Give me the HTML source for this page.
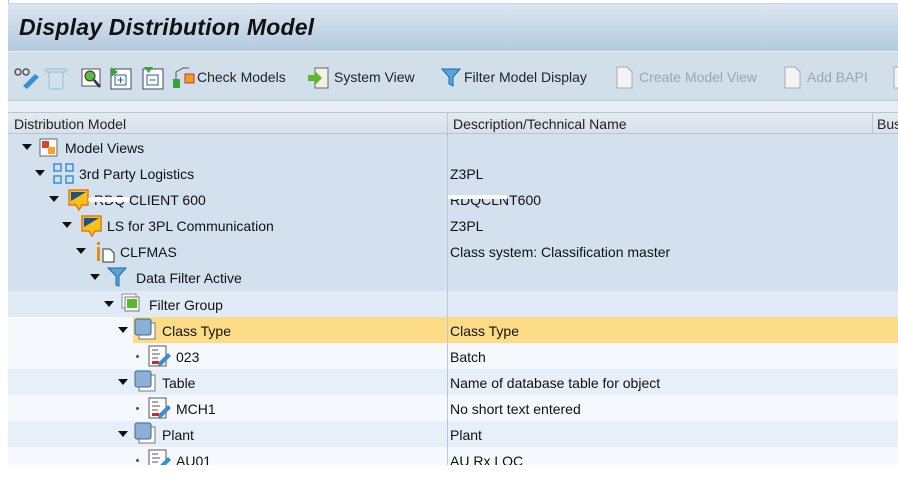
<!DOCTYPE html>
<html><head><style>
*{margin:0;padding:0;box-sizing:border-box}
body{width:898px;height:477px;background:#fff;font-family:"Liberation Sans",sans-serif;position:relative;overflow:hidden}
.abs{position:absolute}
#title{left:8px;top:3px;width:890px;height:48px;background:linear-gradient(#dbe6f1,#b4cadf);border-top:1px solid #c8d6e4}
#title span{position:absolute;left:11px;top:10px;font-size:23px;font-weight:bold;font-style:italic;color:#111;letter-spacing:0.2px}
#tb{left:8px;top:51px;width:890px;height:50px;background:#d1dfeb;border-top:1px solid #e9f0f7;border-bottom:1px solid #b9cadb}
.tbt{position:absolute;top:17px;font-size:14px;color:#222}
.dis{color:#9aa5b0}
#gap{left:8px;top:101px;width:890px;height:11px;background:#e7eef6}
#hdr{left:8px;top:112px;width:890px;height:22px;background:linear-gradient(#e4eaf0,#d8e0e9);border-top:1px solid #b8c4d0;border-bottom:1px solid #b8c4d0;font-size:14px;color:#222}
.row{position:absolute;left:8px;width:890px;height:26px;font-size:14px;color:#111}
.row .t{position:absolute;top:6px}
.row .d{position:absolute;left:442px;top:6px}
.tri{position:absolute;top:10px;width:0;height:0;border-left:5px solid transparent;border-right:5px solid transparent;border-top:6px solid #111}
.dot{position:absolute;top:12px;width:3px;height:3px;background:#555;border-radius:50%}
.vl{position:absolute;top:112px;width:1px;height:353px;background:#b8c8d8}
</style></head><body>
<div class="abs" style="left:8px;top:0;width:1px;height:465px;background:#b9c7d4"></div>
<div id="title" class="abs"><span>Display Distribution Model</span></div>
<div id="tb" class="abs">
<svg class="abs" style="left:5px;top:12px" width="190" height="28">
<g fill="none" stroke="#555" stroke-width="1.5"><circle cx="5" cy="8" r="3"/><circle cx="13" cy="8" r="3"/></g><path d="M10 22 L22 10 L26 13 L14 25Z" fill="#3b8ed0"/>
<g fill="#cfe0ee" stroke="#9cbad3"><rect x="36" y="8" width="14" height="17" rx="2"/><rect x="33" y="5" width="20" height="3"/></g>
<rect x="69" y="5" width="18" height="17" fill="#fff" stroke="#555"/><circle cx="77" cy="12" r="5" fill="#5bbb3b" stroke="#333"/><path d="M81 16 L87 23" stroke="#333" stroke-width="2.5"/>
<rect x="98" y="5" width="20" height="20" fill="#fff" stroke="#445"/><path d="M98 3 L105 8 L98 13Z" fill="#3aa33a"/><rect x="102" y="11" width="11" height="10" fill="none" stroke="#1f5fa0"/><path d="M107.5 13v6M104.5 16h6" stroke="#1f5fa0"/>
<rect x="130" y="5" width="20" height="20" fill="#fff" stroke="#445"/><path d="M131 3 L140 3 L135.5 9Z" fill="#3aa33a"/><rect x="134" y="11" width="11" height="10" fill="none" stroke="#1f5fa0"/><path d="M136.5 16h6" stroke="#1f5fa0"/>
<rect x="160" y="15" width="7" height="9" fill="#3aa33a"/><path d="M163 15 L163 8 L170 4 L176 4" stroke="#555" fill="none"/><rect x="172" y="10" width="9" height="9" fill="#f0a020" stroke="#c33"/>
</svg>
<span class="tbt" style="left:189px">Check Models</span>
<svg class="abs" style="left:298px;top:13px" width="26" height="26"><rect x="9" y="3" width="13" height="20" fill="#f3f0e4" stroke="#666"/><path d="M2 10h7v-4l7 7-7 7v-4H2z" fill="#5cb82e"/></svg>
<span class="tbt" style="left:326px">System View</span>
<svg class="abs" style="left:432px;top:15px" width="22" height="22"><path d="M2 2h18l-7 8v9l-4-2v-7z" fill="#5aa3d6" stroke="#1f6aa8"/></svg>
<span class="tbt" style="left:456px">Filter Model Display</span>
<svg class="abs" style="left:607px;top:13px" width="20" height="26"><path d="M2 2h10l5 5v16H2z" fill="#f4f4f4" stroke="#aaa"/></svg>
<span class="tbt dis" style="left:631px">Create Model View</span>
<svg class="abs" style="left:775px;top:13px" width="20" height="26"><path d="M2 2h10l5 5v16H2z" fill="#f4f4f4" stroke="#aaa"/></svg>
<span class="tbt dis" style="left:799px">Add BAPI</span>
<svg class="abs" style="left:884px;top:13px" width="10" height="26"><path d="M2 2h10v21H2z" fill="#f4f4f4" stroke="#aaa"/></svg>
</div>
<div id="gap" class="abs"></div>
<div id="hdr" class="abs"><span class="abs" style="left:6px;top:3px">Distribution Model</span><span class="abs" style="left:445px;top:3px">Description/Technical Name</span><span class="abs" style="left:869px;top:3px">Bus</span></div>

<div class="row" style="top:134px;height:157px;background:#d3e1ee"></div>
<div class="row" style="top:291px;background:#e1ebf6"></div>
<div class="row" style="top:317px;background:#f5f9fe"></div>
<div class="row" style="top:317px;left:133px;width:765px;background:#fcdc86"></div>
<div class="row" style="top:343px;background:#f5f9fe"></div>
<div class="row" style="top:369px;background:#e7eff8"></div>
<div class="row" style="top:395px;background:#f5f9fe"></div>
<div class="row" style="top:421px;background:#e7eff8"></div>
<div class="row" style="top:447px;height:18px;background:#f5f9fe"></div>

<div class="row" style="top:134px"><div class="tri" style="left:14px"></div>
<svg class="abs" style="left:31px;top:4px" width="20" height="20"><rect x="1" y="1" width="17" height="17" fill="#fff" stroke="#666"/><rect x="3" y="3" width="7" height="7" fill="#d9452a"/><rect x="9" y="9" width="7" height="7" fill="#f6a623"/></svg>
<span class="t" style="left:57px">Model Views</span></div>
<div class="row" style="top:160px"><div class="tri" style="left:27px"></div>
<svg class="abs" style="left:45px;top:3px" width="24" height="22"><g fill="none" stroke="#3a8fcf" stroke-width="1.5"><rect x="1" y="1" width="7" height="7"/><rect x="13" y="1" width="7" height="7"/><rect x="1" y="13" width="7" height="7"/><rect x="13" y="13" width="7" height="7"/></g></svg>
<span class="t" style="left:71px">3rd Party Logistics</span><span class="d">Z3PL</span></div>
<div class="row" style="top:186px"><div class="tri" style="left:41px"></div>
<svg class="abs" style="left:59px;top:2px" width="24" height="24"><path d="M2 2h19v15h-6l-3 5-3-5H2z" fill="#f6c21a" stroke="#e07a14" stroke-width="1.5"/><path d="M4 4h15l-15 9z" fill="#1e4f8a"/></svg>
<span class="t" style="left:86px">RDQ CLIENT 600</span><div class="abs" style="left:80px;top:11px;width:42px;height:5px;background:#fff;border-radius:3px"></div><span class="d">RDQCLNT600</span><div class="abs" style="left:440px;top:9px;width:60px;height:4px;background:#fff;border-radius:2px"></div></div>
<div class="row" style="top:212px"><div class="tri" style="left:54px"></div>
<svg class="abs" style="left:72px;top:2px" width="24" height="24"><path d="M2 2h19v15h-6l-3 5-3-5H2z" fill="#f6c21a" stroke="#e07a14" stroke-width="1.5"/><path d="M4 4h15l-15 9z" fill="#1e4f8a"/></svg>
<span class="t" style="left:99px">LS for 3PL Communication</span><span class="d">Z3PL</span></div>
<div class="row" style="top:238px"><div class="tri" style="left:68px"></div>
<svg class="abs" style="left:86px;top:3px" width="24" height="22"><rect x="3" y="1" width="3" height="3" fill="#e88a1a"/><rect x="3" y="6" width="3" height="14" fill="#e88a1a"/><path d="M9 8h7l4 4v9H9z" fill="#fff" stroke="#333"/></svg>
<span class="t" style="left:112px">CLFMAS</span><span class="d">Class system: Classification master</span></div>
<div class="row" style="top:264px"><div class="tri" style="left:82px"></div>
<svg class="abs" style="left:99px;top:2px" width="22" height="22"><path d="M1 2h18l-7 8v10l-3-1v-9z" fill="#5aa3d6" stroke="#1f6aa8"/></svg>
<span class="t" style="left:128px">Data Filter Active</span></div>
<div class="row" style="top:291px"><div class="tri" style="left:96px"></div>
<svg class="abs" style="left:113px;top:2px" width="24" height="22"><rect x="1" y="1" width="14" height="14" fill="#fff" stroke="#888"/><rect x="4" y="4" width="14" height="14" fill="#fff" stroke="#777"/><rect x="6" y="6" width="10" height="9" fill="#5ab82e"/></svg>
<span class="t" style="left:141px">Filter Group</span></div>
<div class="row" style="top:317px"><div class="tri" style="left:110px"></div>
<svg class="abs" style="left:126px;top:1px" width="26" height="24"><rect x="5" y="5" width="16" height="16" fill="#fff" stroke="#777"/><rect x="1" y="1" width="16" height="16" rx="2" fill="#8fb0d6" stroke="#3566a0"/></svg>
<span class="t" style="left:154px">Class Type</span><span class="d">Class Type</span></div>
<div class="row" style="top:343px"><div class="dot" style="left:128px"></div>
<svg class="abs" style="left:140px;top:2px" width="28" height="24"><rect x="1" y="1" width="17" height="20" fill="#fff" stroke="#555"/><path d="M4 5h6M4 9h8M4 13h6" stroke="#555"/><rect x="4" y="16" width="7" height="3" fill="#d22"/><path d="M11 17l9-9 3 3-9 9-4 1z" fill="#3a8fcf"/></svg>
<span class="t" style="left:168px">023</span><span class="d">Batch</span></div>
<div class="row" style="top:369px"><div class="tri" style="left:110px"></div>
<svg class="abs" style="left:126px;top:1px" width="26" height="24"><rect x="5" y="5" width="16" height="16" fill="#fff" stroke="#777"/><rect x="1" y="1" width="16" height="16" rx="2" fill="#8fb0d6" stroke="#3566a0"/></svg>
<span class="t" style="left:154px">Table</span><span class="d">Name of database table for object</span></div>
<div class="row" style="top:395px"><div class="dot" style="left:128px"></div>
<svg class="abs" style="left:140px;top:2px" width="28" height="24"><rect x="1" y="1" width="17" height="20" fill="#fff" stroke="#555"/><path d="M4 5h6M4 9h8M4 13h6" stroke="#555"/><rect x="4" y="16" width="7" height="3" fill="#d22"/><path d="M11 17l9-9 3 3-9 9-4 1z" fill="#3a8fcf"/></svg>
<span class="t" style="left:168px">MCH1</span><span class="d">No short text entered</span></div>
<div class="row" style="top:421px"><div class="tri" style="left:110px"></div>
<svg class="abs" style="left:126px;top:1px" width="26" height="24"><rect x="5" y="5" width="16" height="16" fill="#fff" stroke="#777"/><rect x="1" y="1" width="16" height="16" rx="2" fill="#8fb0d6" stroke="#3566a0"/></svg>
<span class="t" style="left:154px">Plant</span><span class="d">Plant</span></div>
<div class="row" style="top:447px;height:18px;overflow:hidden"><div class="dot" style="left:128px"></div>
<svg class="abs" style="left:140px;top:2px" width="28" height="24"><rect x="1" y="1" width="17" height="20" fill="#fff" stroke="#555"/><path d="M4 5h6M4 9h8M4 13h6" stroke="#555"/><path d="M11 17l9-9 3 3-9 9-4 1z" fill="#3a8fcf"/></svg>
<span class="t" style="left:168px">AU01</span><span class="d">AU Rx LOC</span></div>

<div class="vl" style="left:447px"></div>
<div class="vl" style="left:872px;height:22px"></div>
</body></html>
